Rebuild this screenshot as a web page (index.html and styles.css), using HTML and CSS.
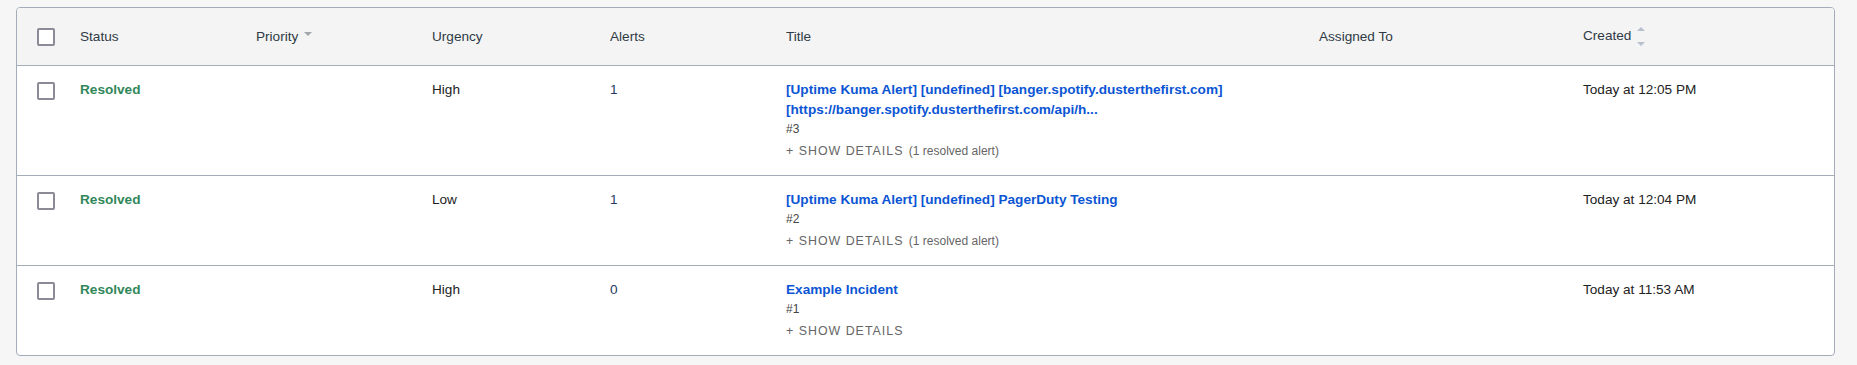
FILE: index.html
```html
<!DOCTYPE html>
<html lang="en">
<head>
    <meta charset="UTF-8">
    <meta name="viewport" content="width=device-width, initial-scale=1.0">
    <title>Incidents</title>
    <link rel="stylesheet" href="styles.css">
</head>
<body>
    <div class="incidents-box">
        <table class="incidents-table">
            <colgroup>
                <col class="col-check">
                <col class="col-status">
                <col class="col-priority">
                <col class="col-urgency">
                <col class="col-alerts">
                <col class="col-title">
                <col class="col-assigned">
                <col class="col-created">
            </colgroup>
            <thead>
                <tr>
                    <th class="check-cell"><span class="checkbox"></span></th>
                    <th>Status</th>
                    <th>Priority <span class="sort-down"></span></th>
                    <th>Urgency</th>
                    <th>Alerts</th>
                    <th>Title</th>
                    <th>Assigned To</th>
                    <th>Created <span class="sort-both"><span class="sort-up"></span><span class="sort-down"></span></span></th>
                </tr>
            </thead>
            <tbody>
                <tr>
                    <td class="check-cell"><span class="checkbox"></span></td>
                    <td class="status">Resolved</td>
                    <td></td>
                    <td>High</td>
                    <td class="alerts">1</td>
                    <td>
                        <a class="incident-title" href="#">[Uptime Kuma Alert] [undefined] [banger.spotify.dusterthefirst.com] [https://banger.spotify.dusterthefirst.com/api/h...</a>
                        <div class="incident-number">#3</div>
                        <button class="show-details">+ SHOW DETAILS <span class="alert-count">(1 resolved alert)</span></button>
                    </td>
                    <td></td>
                    <td>Today at 12:05 PM</td>
                </tr>
                <tr>
                    <td class="check-cell"><span class="checkbox"></span></td>
                    <td class="status">Resolved</td>
                    <td></td>
                    <td>Low</td>
                    <td class="alerts">1</td>
                    <td>
                        <a class="incident-title" href="#">[Uptime Kuma Alert] [undefined] PagerDuty Testing</a>
                        <div class="incident-number">#2</div>
                        <button class="show-details">+ SHOW DETAILS <span class="alert-count">(1 resolved alert)</span></button>
                    </td>
                    <td></td>
                    <td>Today at 12:04 PM</td>
                </tr>
                <tr>
                    <td class="check-cell"><span class="checkbox"></span></td>
                    <td class="status">Resolved</td>
                    <td></td>
                    <td>High</td>
                    <td class="alerts">0</td>
                    <td>
                        <a class="incident-title" href="#">Example Incident</a>
                        <div class="incident-number">#1</div>
                        <button class="show-details">+ SHOW DETAILS</button>
                    </td>
                    <td></td>
                    <td>Today at 11:53 AM</td>
                </tr>
            </tbody>
        </table>
    </div>
</body>
</html>
```

FILE: styles.css
```css
body {
    font-family: 'Liberation Sans', Arial, sans-serif;
    font-size: 13.6px;
    color: #222;
    margin: 0;
    padding: 7px 22px 12px 16px;
    background-color: #f6f6f6;
}
.incidents-box {
    background-color: white;
    border: 1px solid #a3acb9;
    border-radius: 4px;
    overflow: hidden;
}
.incidents-table {
    width: 100%;
    border-collapse: collapse;
    table-layout: fixed;
}
.col-check { width: 51px; }
.col-status { width: 176px; }
.col-priority { width: 176px; }
.col-urgency { width: 178px; }
.col-alerts { width: 176px; }
.col-title { width: 533px; }
.col-assigned { width: 264px; }
.col-created { width: 263px; }
th {
    height: 56px;
    padding: 0 12px;
    background-color: #f4f4f4;
    border-bottom: 1px solid #a3acb9;
    text-align: left;
    font-weight: normal;
    color: #2f3a45;
    vertical-align: middle;
}
td {
    padding: 14px 12px 14px;
    line-height: 20px;
    vertical-align: top;
    border-bottom: 1px solid #a3acb9;
}
tbody tr:last-child td {
    border-bottom: none;
}
.check-cell {
    padding-left: 20px;
    padding-right: 0;
}
th.check-cell {
    padding-top: 1px;
}
.checkbox {
    display: block;
    width: 14px;
    height: 14px;
    border: 2px solid #8b8a96;
    border-radius: 2px;
    background: white;
}
td .checkbox {
    margin-top: 2px;
}
.status {
    color: #31875a;
    font-weight: bold;
}
.alerts {
    color: #1f3a64;
}
.incident-title {
    display: block;
    color: #0b55d4;
    font-weight: bold;
    text-decoration: none;
}
.incident-number {
    font-size: 12px;
    line-height: 18px;
    color: #444;
}
.show-details {
    display: block;
    margin-top: 4px;
    padding: 0;
    border: none;
    background: none;
    font-family: inherit;
    font-size: 12.4px;
    line-height: 19px;
    letter-spacing: 1px;
    color: #666;
    cursor: pointer;
}
.alert-count {
    font-size: 12px;
    letter-spacing: 0;
    margin-left: 1px;
}
.sort-down, .sort-up {
    display: inline-block;
    width: 0;
    height: 0;
    border-left: 4px solid transparent;
    border-right: 4px solid transparent;
}
.sort-down {
    border-top: 4px solid #a2a6ad;
    vertical-align: 5px;
    margin-left: 2px;
}
.sort-both {
    display: inline-flex;
    flex-direction: column;
    gap: 11px;
    vertical-align: middle;
    margin-left: 2px;
}
.sort-both .sort-down {
    border-top-color: #b6c0cf;
    margin-left: 0;
}
.sort-up {
    border-bottom: 4px solid #b6c0cf;
}
```
